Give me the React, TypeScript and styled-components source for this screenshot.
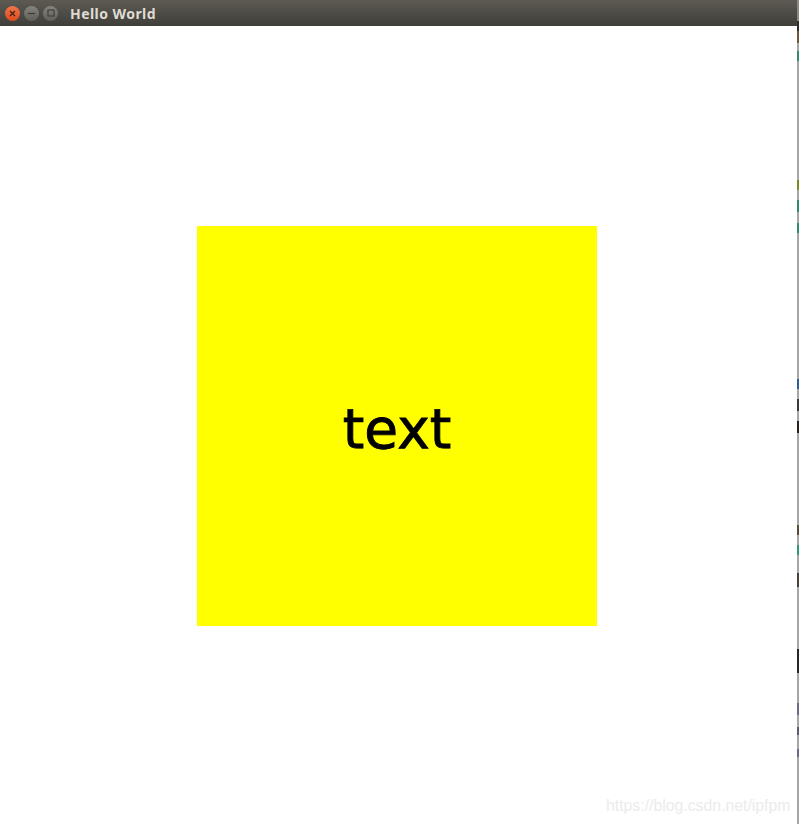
import styled, { createGlobalStyle } from "styled-components";

const GlobalStyle = createGlobalStyle`
  html, body {
    margin: 0;
    padding: 0;
    background: #ffffff;
  }
`;

const Page = styled.div`
  position: relative;
  width: 799px;
  height: 824px;
  display: flex;
  overflow: hidden;
`;

const Window = styled.div`
  width: 797px;
  display: flex;
  flex-direction: column;
`;

const TitleBar = styled.div`
  height: 26px;
  flex-shrink: 0;
  display: flex;
  align-items: center;
  padding-left: 5px;
  background: linear-gradient(#5c5a53, #403e39);
`;

const WindowButton = styled.div<{ $close?: boolean }>`
  width: 15px;
  height: 15px;
  margin-right: 4px;
  border-radius: 50%;
  display: flex;
  align-items: center;
  justify-content: center;
  background: ${(p) =>
    p.$close
      ? "linear-gradient(#f0764a, #dd4a1e)"
      : "linear-gradient(#85847f, #5f5e59)"};
`;

const Title = styled.span`
  margin-left: 8px;
  font-family: "Noto Sans", sans-serif;
  font-size: 14px;
  font-weight: 700;
  letter-spacing: 0.45px;
  color: #dfdbd2;
`;

const Content = styled.div`
  flex: 1;
  padding: 200px 0 0 197px;
  background: #ffffff;
`;

const Square = styled.div`
  width: 400px;
  height: 400px;
  padding-top: 6px;
  box-sizing: border-box;
  display: flex;
  align-items: center;
  justify-content: center;
  background: #ffff00;
`;

const Label = styled.span`
  font-family: "DejaVu Sans", sans-serif;
  font-size: 55px;
  line-height: 1;
  color: #000000;
  -webkit-text-stroke: 0.9px #000000;
`;

const Strip = styled.div`
  width: 2px;
  display: flex;
  flex-direction: column;
  background: #a6a6a6;
`;

const StripMark = styled.div<{ $top: number; $height: number; $color: string }>`
  height: ${(p) => p.$height}px;
  margin-top: ${(p) => p.$top}px;
  background: ${(p) => p.$color};
`;

const Watermark = styled.div`
  position: absolute;
  left: 606px;
  top: 797px;
  font-family: "Liberation Sans", Arial, sans-serif;
  font-size: 15.8px;
  color: #ecebeb;
`;

// gaps are relative to the end of the previous mark
const stripMarks = [
  { top: 0, height: 21, color: "#8b8984" },
  { top: 0, height: 10, color: "#2e2c2a" },
  { top: 0, height: 12, color: "#6a5a3a" },
  { top: 8, height: 10, color: "#2e8a70" },
  { top: 119, height: 10, color: "#7d8a20" },
  { top: 10, height: 12, color: "#2e8a70" },
  { top: 11, height: 10, color: "#2e8a70" },
  { top: 146, height: 10, color: "#2a5f9a" },
  { top: 10, height: 12, color: "#3a3a3a" },
  { top: 10, height: 12, color: "#2a2218" },
  { top: 92, height: 10, color: "#5a4a38" },
  { top: 10, height: 10, color: "#2e9a70" },
  { top: 18, height: 14, color: "#4a4036" },
  { top: 62, height: 24, color: "#262626" },
  { top: 30, height: 12, color: "#6a6a80" },
  { top: 12, height: 8, color: "#5a5a70" },
  { top: 14, height: 8, color: "#6a6a80" },
];

export default function App() {
  return (
    <>
      <GlobalStyle />
      <Page>
        <Window>
          <TitleBar>
            <WindowButton $close>
              <svg width="7" height="7" viewBox="0 0 7 7">
                <path d="M1 1l5 5M6 1L1 6" stroke="#4a2214" strokeWidth="1.3" />
              </svg>
            </WindowButton>
            <WindowButton>
              <svg width="7" height="7" viewBox="0 0 7 7">
                <path d="M0 3.5h7" stroke="#3c3b37" strokeWidth="1.2" />
              </svg>
            </WindowButton>
            <WindowButton>
              <svg width="8" height="8" viewBox="0 0 8 8">
                <rect x="1" y="1" width="6" height="6" fill="none" stroke="#3c3b37" strokeWidth="1.1" />
              </svg>
            </WindowButton>
            <Title>Hello World</Title>
          </TitleBar>
          <Content>
            <Square>
              <Label>text</Label>
            </Square>
          </Content>
        </Window>
        <Strip>
          {stripMarks.map((mark, index) => (
            <StripMark key={index} $top={mark.top} $height={mark.height} $color={mark.color} />
          ))}
        </Strip>
        <Watermark>https://blog.csdn.net/ipfpm</Watermark>
      </Page>
    </>
  );
}
